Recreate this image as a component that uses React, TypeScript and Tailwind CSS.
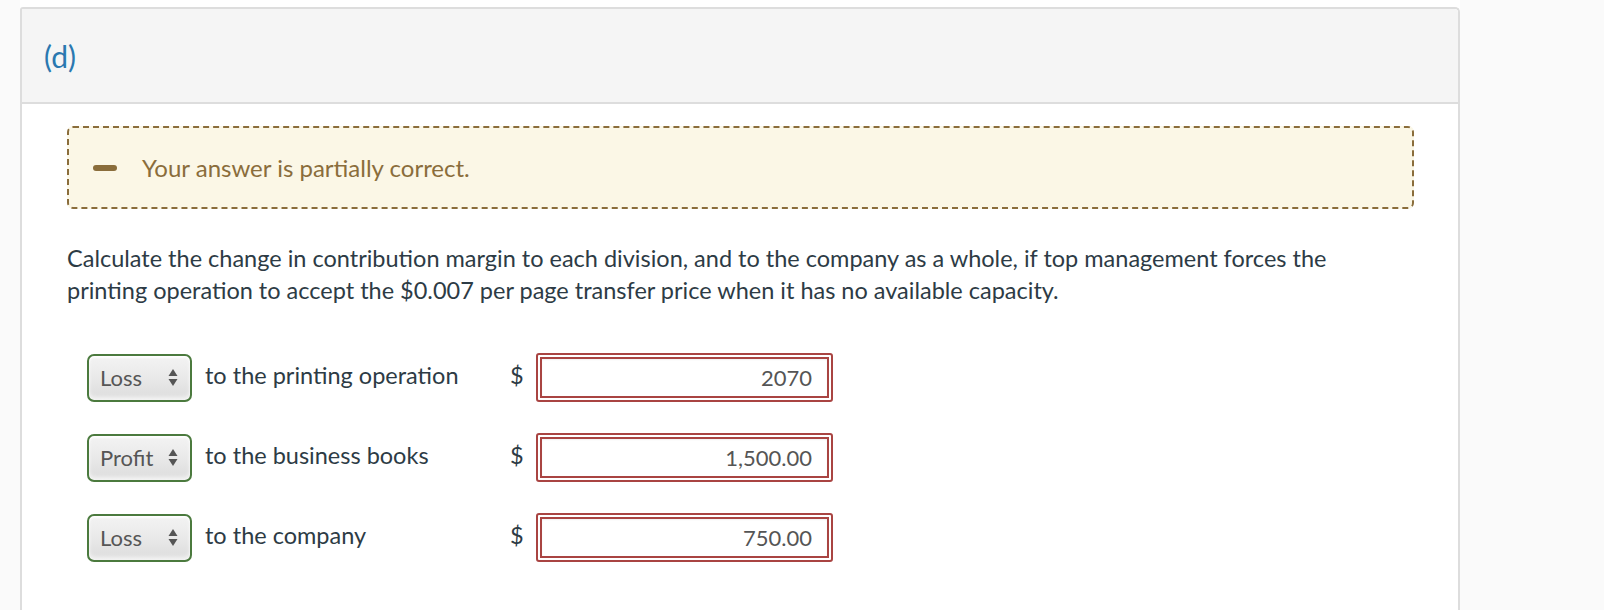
import React from "react";

const rows = [
  { sel: "Loss", label: "to the printing operation", value: "2070" },
  { sel: "Profit", label: "to the business books", value: "1,500.00" },
  { sel: "Loss", label: "to the company", value: "750.00" },
];

function Arrows() {
  return (
    <svg width="10" height="19" viewBox="0 0 10 19" className="shrink-0">
      <path d="M5 1 L9.5 8 L0.5 8 Z" fill="#555" />
      <path d="M0.5 11 L9.5 11 L5 18 Z" fill="#555" />
    </svg>
  );
}

export default function App() {
  return (
    <div
      className="w-[1604px] h-[610px] overflow-hidden bg-[#fafafa]"
      style={{ fontFamily: "Lato, 'Open Sans', sans-serif" }}
    >
      <div className="ml-[20px] w-[1440px] h-full bg-white pt-[7px]">
        <div className="h-full border-x-2 border-t-2 border-[#dddddd] rounded-tr-[5px] rounded-tl-[3px]">
          <div className="h-[95px] bg-[#f5f5f5] border-b-2 border-[#dddddd] flex items-center pl-[22px] rounded-tr-[4px]">
            <span className="text-[30px] text-[#2a78b0] leading-none">(d)</span>
          </div>
          <div className="pl-[45px] pr-[44px] pt-[22px]">
            <div className="h-[83px] border-2 border-dashed border-[#8a6d3b] bg-[#fbf7e6] rounded-[6px] flex items-center pl-[24px]">
              <div className="w-[24px] h-[6px] rounded-full bg-[#8a6d3b]" />
              <span className="ml-[25px] text-[24px] text-[#8a6d3b] leading-none">
                Your answer is partially correct.
              </span>
            </div>
            <p className="mt-[33px] max-w-[1320px] text-[23.5px] leading-[32px] text-[#2d3b45]">
              Calculate the change in contribution margin to each division, and to the company as a whole, if top management forces the printing operation to accept the $0.007 per page transfer price when it has no available capacity.
            </p>
            <div className="mt-[47px] pl-[20px] flex flex-col gap-[31px]">
              {rows.map((r) => (
                <div key={r.label} className="flex items-center h-[49px]">
                  <div className="w-[105px] h-[48px] rounded-[7px] border-2 border-[#4b7a3e] bg-gradient-to-b from-[#f3f3f3] via-[#e9e9e9] to-[#dcdcdc] shadow-[inset_0_-3px_4px_rgba(255,255,255,0.7),inset_0_2px_2px_rgba(255,255,255,0.9)] flex items-center justify-between pl-[11px] pr-[12px]">
                    <span className="text-[22px] text-[#565656] leading-none">{r.sel}</span>
                    <Arrows />
                  </div>
                  <div className="ml-[13px] w-[305px] text-[23.5px] text-[#2d3b45] leading-none -mt-[4px]">
                    {r.label}
                  </div>
                  <div className="w-[26px] text-[23.5px] text-[#2d3b45] leading-none -mt-[4px]">$</div>
                  <div className="w-[297px] h-[49px] border-[6px] border-double border-[#a94442] rounded-[3px] bg-white flex items-center justify-end pr-[15px] shadow-[inset_0_1px_2px_rgba(0,0,0,0.06)]">
                    <span className="text-[22px] text-[#555555] leading-none">{r.value}</span>
                  </div>
                </div>
              ))}
            </div>
          </div>
        </div>
      </div>
    </div>
  );
}
